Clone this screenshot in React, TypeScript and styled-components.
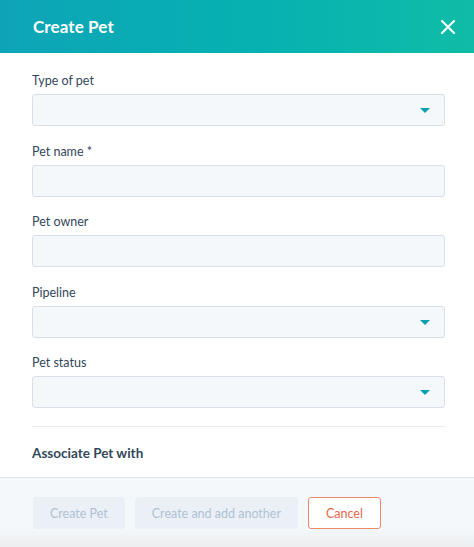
import * as React from "react";
import styled, { createGlobalStyle } from "styled-components";

const GlobalStyle = createGlobalStyle`
  html, body {
    margin: 0;
    padding: 0;
    background: #fff;
  }
  body {
    font-family: Lato, "Open Sans", "Liberation Sans", sans-serif;
    color: #33475b;
  }
`;

const Modal = styled.div`
  width: 474px;
  height: 547px;
  display: flex;
  flex-direction: column;
  background: #fff;
  overflow: hidden;
`;

const Header = styled.header`
  height: 53px;
  flex: none;
  display: flex;
  align-items: center;
  justify-content: space-between;
  padding: 0 16px 0 33px;
  background: linear-gradient(90deg, #0ea4b8 0%, #05b2b1 55%, #10bca7 100%);
  color: #fff;
`;

const Title = styled.h1`
  margin: 0;
  font-size: 17px;
  font-weight: 700;
  letter-spacing: 0.1px;
`;

const CloseButton = styled.button`
  width: 20px;
  height: 20px;
  padding: 0;
  border: 0;
  background: none;
  display: grid;
  place-items: center;
  cursor: pointer;
`;

const Body = styled.div`
  flex: 1;
  padding: 19px 29px 0 32px;
  display: flex;
  flex-direction: column;
`;

const Field = styled.div`
  display: flex;
  flex-direction: column;
  margin-bottom: 16.5px;
`;

const Label = styled.label`
  font-size: 12.5px;
  line-height: 18px;
  margin-bottom: 4px;
  color: #33475b;
`;

const Input = styled.div`
  position: relative;
  height: 32px;
  box-sizing: border-box;
  border: 1px solid #d8e1ea;
  border-radius: 3px;
  background: #f5f8fa;
`;

const Caret = styled.span`
  position: absolute;
  right: 14px;
  top: 13px;
  width: 0;
  height: 0;
  border-left: 5px solid transparent;
  border-right: 5px solid transparent;
  border-top: 5px solid #0b9fb4;
`;

const Divider = styled.hr`
  margin: 1px 0 0;
  border: 0;
  border-top: 1px solid #e5ebf1;
`;

const SectionTitle = styled.h2`
  margin: 17px 0 0;
  font-size: 13.5px;
  font-weight: 700;
  line-height: 18px;
  color: #33475b;
`;

const Footer = styled.footer`
  height: 70px;
  flex: none;
  box-sizing: border-box;
  border-top: 1px solid #dfe3eb;
  background: linear-gradient(180deg, #f5f8fa 0%, #f5f8fa 72%, #eceef0 100%);
  display: flex;
  align-items: flex-start;
  gap: 10px;
  padding: 19px 0 0 33px;
`;

const Button = styled.button<{ $variant?: "disabled" | "outline" }>`
  height: 32px;
  box-sizing: border-box;
  border-radius: 3px;
  font-family: inherit;
  font-size: 12.5px;
  padding: 0 ${(p) => (p.$variant === "outline" ? "17px" : "16px")};
  border: 1px solid
    ${(p) => (p.$variant === "outline" ? "#ed8a6e" : "#eaf0f6")};
  background: ${(p) => (p.$variant === "outline" ? "#fff" : "#eaf0f6")};
  color: ${(p) => (p.$variant === "outline" ? "#e0684a" : "#b0c1d4")};
`;

type FieldProps = { label: string; select?: boolean };

const FormField: React.FC<FieldProps> = ({ label, select }) => (
  <Field>
    <Label>{label}</Label>
    <Input>{select && <Caret />}</Input>
  </Field>
);

export default function App() {
  return (
    <>
      <GlobalStyle />
      <Modal>
        <Header>
          <Title>Create Pet</Title>
          <CloseButton aria-label="Close">
            <svg width="14" height="14" viewBox="0 0 14 14">
              <path
                d="M1 1L13 13M13 1L1 13"
                stroke="#fff"
                strokeWidth="2"
                strokeLinecap="round"
              />
            </svg>
          </CloseButton>
        </Header>
        <Body>
          <FormField label="Type of pet" select />
          <FormField label="Pet name *" />
          <FormField label="Pet owner" />
          <FormField label="Pipeline" select />
          <FormField label="Pet status" select />
          <Divider />
          <SectionTitle>Associate Pet with</SectionTitle>
        </Body>
        <Footer>
          <Button $variant="disabled">Create Pet</Button>
          <Button $variant="disabled">Create and add another</Button>
          <Button $variant="outline">Cancel</Button>
        </Footer>
      </Modal>
    </>
  );
}
